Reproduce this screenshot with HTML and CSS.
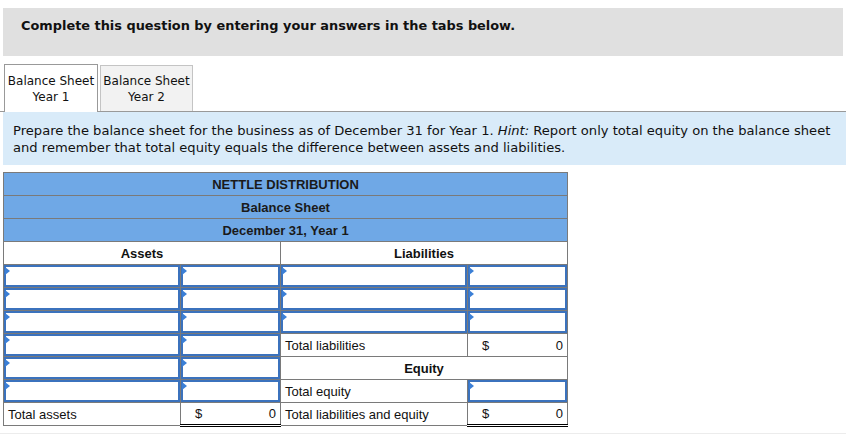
FILE: index.html
```html
<!DOCTYPE html>
<html>
<head>
<meta charset="utf-8">
<link rel="stylesheet" href="styles.css">
</head>
<body>
<div class="banner">Complete this question by entering your answers in the tabs below.</div>
<div class="tabs">
  <div class="tab active">Balance Sheet<br>Year 1</div>
  <div class="tab">Balance Sheet<br>Year 2</div>
</div>
<div class="info">Prepare the balance sheet for the business as of December 31 for Year 1. <i>Hint:</i> Report only total equity on the balance sheet and remember that total equity equals the difference between assets and liabilities.</div>
<table class="bs">
  <colgroup><col class="c1"><col class="c2"><col class="c3"><col class="c4"></colgroup>
  <tr class="hd"><td colspan="4">NETTLE DISTRIBUTION</td></tr>
  <tr class="hd"><td colspan="4">Balance Sheet</td></tr>
  <tr class="hd"><td colspan="4">December 31, Year 1</td></tr>
  <tr class="sec"><td colspan="2">Assets</td><td colspan="2">Liabilities</td></tr>
  <tr>
    <td class="in"><div class="fld"></div></td><td class="in"><div class="fld"></div></td>
    <td class="in"><div class="fld"></div></td><td class="in"><div class="fld"></div></td>
  </tr>
  <tr>
    <td class="in"><div class="fld"></div></td><td class="in"><div class="fld"></div></td>
    <td class="in"><div class="fld"></div></td><td class="in"><div class="fld"></div></td>
  </tr>
  <tr>
    <td class="in"><div class="fld"></div></td><td class="in"><div class="fld"></div></td>
    <td class="in"><div class="fld"></div></td><td class="in"><div class="fld"></div></td>
  </tr>
  <tr>
    <td class="in"><div class="fld"></div></td><td class="in"><div class="fld"></div></td>
    <td class="lbl">Total liabilities</td><td class="amt top"><span>$</span><span>0</span></td>
  </tr>
  <tr>
    <td class="in"><div class="fld"></div></td><td class="in"><div class="fld"></div></td>
    <td class="sec" colspan="2">Equity</td>
  </tr>
  <tr>
    <td class="in"><div class="fld"></div></td><td class="in"><div class="fld"></div></td>
    <td class="lbl">Total equity</td><td class="in"><div class="fld"></div></td>
  </tr>
  <tr>
    <td class="lbl">Total assets</td><td class="amt top dbl"><span>$</span><span>0</span></td>
    <td class="lbl">Total liabilities and equity</td><td class="amt top dbl"><span>$</span><span>0</span></td>
  </tr>
</table>
<div class="rule"></div>
</body>
</html>
```

FILE: styles.css
```css
html, body {
  margin: 0;
  padding: 0;
  background: #fff;
}
body {
  font-family: "DejaVu Sans", Verdana, sans-serif;
  color: #000;
}
.banner {
  margin: 8px 3px 0 3px;
  height: 48px;
  box-sizing: border-box;
  padding: 10px 0 0 18px;
  background: #e0e0e0;
  font-size: 12.9px;
  font-weight: bold;
  line-height: 16px;
  color: #111;
}
.tabs {
  margin-top: 8px;
  display: flex;
  align-items: flex-start;
  gap: 2px;
  padding-left: 4px;
  border-bottom: 1px solid #999;
  height: 47px;
}
.tab {
  box-sizing: border-box;
  width: 93px;
  margin-top: 1px;
  height: 46px;
  padding-top: 7px;
  text-align: center;
  font-size: 12px;
  line-height: 16px;
  color: #111;
  background: #f2f2f2;
  border: 1px solid #c4c4c4;
  border-bottom: none;
}
.tab.active {
  width: 94px;
  background: #fff;
  border-color: #999;
  margin-top: 0;
  height: 48px;
  padding-top: 8px;
}
.info {
  margin-left: 3px;
  height: 53px;
  box-sizing: border-box;
  padding: 10px 10px 0 10px;
  background: #d9ebf9;
  font-size: 13.1px;
  line-height: 17px;
  color: #111;
}
.bs {
  margin: 7px 0 0 3px;
  border-collapse: collapse;
  font-family: "Liberation Sans", Arial, sans-serif;
  font-size: 13px;
  color: #111;
  border: 1px solid #7a7a7a;
}
.c1 { width: 177px; }
.c2 { width: 100px; }
.c3 { width: 187px; }
.c4 { width: 100px; }
.bs td {
  border: 1px solid #7a7a7a;
  padding: 0;
  height: 23px;
  box-sizing: border-box;
}
.hd td {
  background: #6fa8e6;
  text-align: center;
  font-weight: bold;
  color: #1a1a1a;
}
.sec td, td.sec {
  text-align: center;
  font-weight: bold;
  background: #fff;
}
td.lbl {
  padding-left: 4px;
}
td.amt {
  padding: 0 4px 0 14px;
}
td.amt span:first-child {
  float: left;
}
td.amt span:last-child {
  float: right;
}
td.amt.top {
  border-top: 1px solid #000;
}
td.amt.dbl {
  border-bottom: 3px double #000;
}
.fld {
  position: relative;
  height: 22px;
  box-sizing: border-box;
  border: 2px solid #3b72bd;
  background: #fff;
}
.fld::before {
  content: "";
  position: absolute;
  left: -1px;
  top: 0;
  border-left: 5px solid #3b7fd6;
  border-top: 4px solid transparent;
  border-bottom: 4px solid transparent;
}
.rule {
  margin-top: 6px;
  border-top: 1px solid #ececec;
}
```
